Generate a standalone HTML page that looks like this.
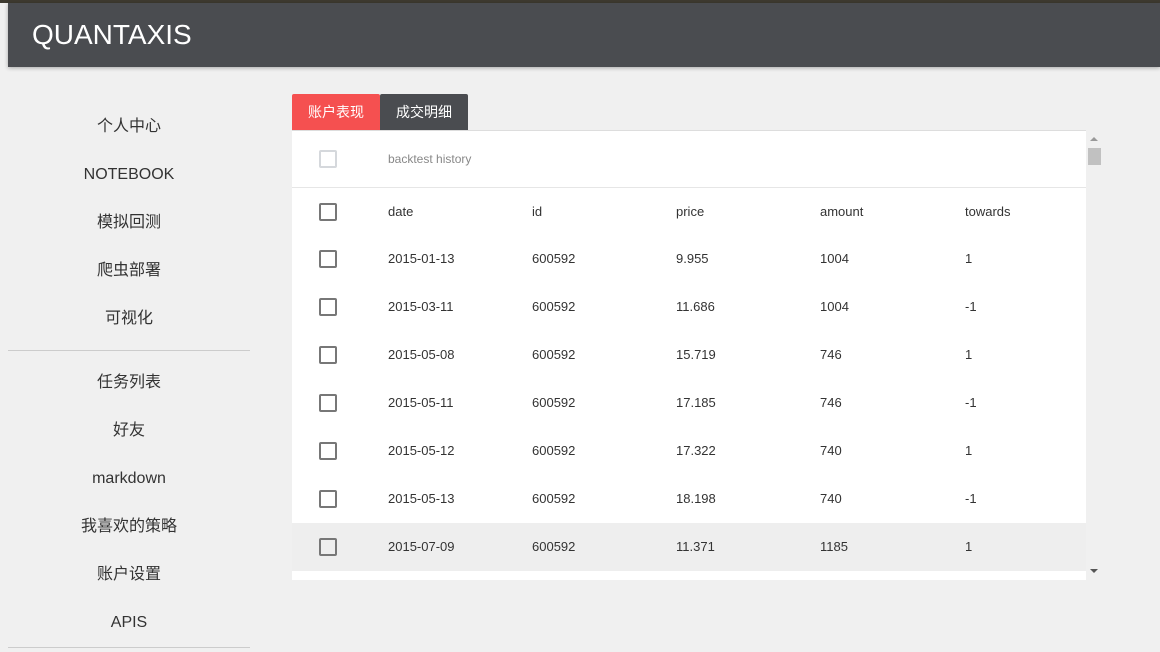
<!DOCTYPE html>
<html><head><meta charset="utf-8"><style>
*{margin:0;padding:0;box-sizing:border-box}
html,body{width:1160px;height:652px;overflow:hidden}
body{background:#f0f0f0;font-family:"Liberation Sans","Noto Sans CJK SC",sans-serif;position:relative}
.top{position:absolute;left:0;top:0;width:1160px;height:3px;background:#3e3a30}
.hdr{position:absolute;left:8px;top:3px;width:1152px;height:64px;background:#4a4c50;box-shadow:0 1px 4px rgba(0,0,0,.3)}
.hdr span{position:absolute;left:24px;top:16px;color:#fff;font-size:28px}
.side{position:absolute;left:8px;top:103px;width:242px}
.side div{height:48px;line-height:48px;text-align:center;font-size:16px;color:#333}
.side hr{border:0;border-top:1px solid #ccc;margin:7px 0 8px}
.tab{position:absolute;top:94px;height:36px;line-height:36px;color:#fff;font-size:14px;text-align:center;border-radius:2px 2px 0 0}
.panel{position:absolute;left:292px;top:130px;width:794px;height:450px;background:#fff;border-top:1px solid #ddd}
.sb{position:absolute;left:1086px;top:130px;width:16px;height:450px;background:#f0f0f0}
.row{position:absolute;left:0;width:794px;height:48px;font-size:13px;color:#333}
.row span{position:absolute;top:16px}
.cb{position:absolute;left:27px;top:15px;width:18px;height:18px;border:2px solid #777;border-radius:2px}
</style></head><body>
<div class="top"></div>
<div class="hdr"><span>QUANTAXIS</span></div>
<div class="side">
<div>个人中心</div><div>NOTEBOOK</div><div>模拟回测</div><div>爬虫部署</div><div>可视化</div>
<hr>
<div>任务列表</div><div>好友</div><div>markdown</div><div>我喜欢的策略</div><div>账户设置</div><div>APIS</div>
<hr style="margin-top:0">
</div>
<div class="tab" style="left:292px;width:88px;background:#f55050">账户表现</div>
<div class="tab" style="left:380px;width:88px;background:#4a4c50">成交明细</div>
<div class="panel">
<div class="row" style="top:0;height:57px;border-bottom:1px solid #e6e6e6"><div class="cb" style="top:19px;border-color:#d5d8dc"></div><span style="left:96px;top:21px;color:#888;font-size:12px">backtest history</span></div>
<div class="row" style="top:57px"><div class="cb"></div><span style="left:96px">date</span><span style="left:240px">id</span><span style="left:384px">price</span><span style="left:528px">amount</span><span style="left:673px">towards</span></div>
<div class="row" style="top:104px"><div class="cb"></div><span style="left:96px">2015-01-13</span><span style="left:240px">600592</span><span style="left:384px">9.955</span><span style="left:528px">1004</span><span style="left:673px">1</span></div>
<div class="row" style="top:152px"><div class="cb"></div><span style="left:96px">2015-03-11</span><span style="left:240px">600592</span><span style="left:384px">11.686</span><span style="left:528px">1004</span><span style="left:673px">-1</span></div>
<div class="row" style="top:200px"><div class="cb"></div><span style="left:96px">2015-05-08</span><span style="left:240px">600592</span><span style="left:384px">15.719</span><span style="left:528px">746</span><span style="left:673px">1</span></div>
<div class="row" style="top:248px"><div class="cb"></div><span style="left:96px">2015-05-11</span><span style="left:240px">600592</span><span style="left:384px">17.185</span><span style="left:528px">746</span><span style="left:673px">-1</span></div>
<div class="row" style="top:296px"><div class="cb"></div><span style="left:96px">2015-05-12</span><span style="left:240px">600592</span><span style="left:384px">17.322</span><span style="left:528px">740</span><span style="left:673px">1</span></div>
<div class="row" style="top:344px"><div class="cb"></div><span style="left:96px">2015-05-13</span><span style="left:240px">600592</span><span style="left:384px">18.198</span><span style="left:528px">740</span><span style="left:673px">-1</span></div>
<div class="row" style="top:392px;background:#eee"><div class="cb"></div><span style="left:96px">2015-07-09</span><span style="left:240px">600592</span><span style="left:384px">11.371</span><span style="left:528px">1185</span><span style="left:673px">1</span></div>
</div>
<div class="sb">
<div style="position:absolute;left:4px;top:7px;border:4px solid transparent;border-bottom:4px solid #999;border-top:0"></div>
<div style="position:absolute;left:2px;top:18px;width:13px;height:17px;background:#c1c1c1"></div>
<div style="position:absolute;left:4px;top:439px;border:4px solid transparent;border-top:4px solid #555;border-bottom:0"></div>
</div>
</body></html>
